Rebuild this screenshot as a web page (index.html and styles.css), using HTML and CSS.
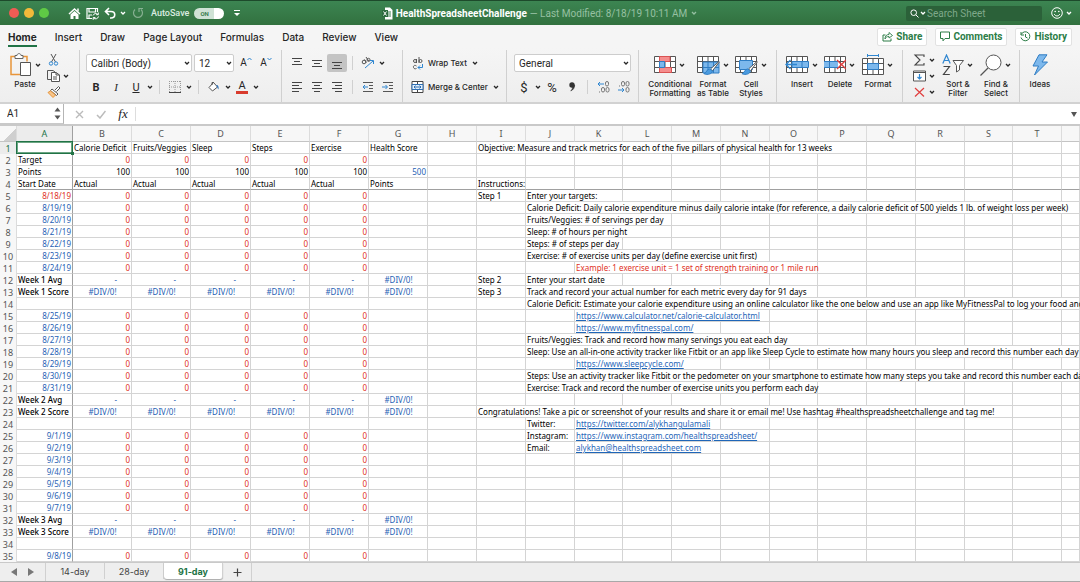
FILE: index.html
```html
<!DOCTYPE html>
<html lang="en">

<head>
    <meta charset="UTF-8">
    <meta name="viewport" content="width=device-width, initial-scale=1.0">
    <title>HealthSpreadsheetChallenge</title>
    <link rel="stylesheet" href="styles.css">
</head>

<body>
    <!-- shared icons -->
    <svg class="defs" aria-hidden="true">
        <symbol id="chev" viewBox="0 0 8 8"><path d="M2 3l2 2 2-2" fill="none" stroke="currentColor" stroke-width="1.3"/></symbol>
        <symbol id="grid" viewBox="0 0 22 18"><path d="M.5 .5h21v16H.5zM.5 5.500h21M.5 11.500h21M5.500 .5v16M11 .5v16M16.500 .5v16" fill="#fff" stroke="#555"/></symbol>
        <symbol id="brush" viewBox="0 0 18 16"><path d="M17 1L8 9l2 2 7-9z" fill="#fff" stroke="#555"/><path d="M7 9c-3 0-3 4-6 5 4 2 9 0 9-3z" fill="#4a9be0" stroke="#2f7dc4"/></symbol>
    </svg>

    <header class="titlebar">
        <div class="quick">
            <div class="lights">
                <span class="light red"></span>
                <span class="light yellow"></span>
                <span class="light green"></span>
            </div>
            <button class="quick-btn" aria-label="Home"><svg width="13" height="13" viewBox="0 0 13 13"><path d="M1 7l5.500-5L12 7" fill="none" stroke="#fff" stroke-width="1.500"/><path d="M2.500 7.500l4-3.500 4 3.500V12h-3V9h-2v3h-3z" fill="#fff"/><path d="M10 1.500v3" stroke="#fff" stroke-width="1.500"/></svg></button>
            <button class="quick-btn" aria-label="Save"><svg width="13" height="13" viewBox="0 0 13 13"><path d="M6 11.500H1V1.500h10.500V5M3 1.500V5h6.500V1.500M3 11V8h3" fill="none" stroke="#fff" stroke-width="1.200"/><path d="M7 8.500a3 3 0 0 1 5-1M12.500 9.500a3 3 0 0 1-5 1.500M12.300 5.500v2.200h-2.200M7.200 12.800v-2.200h2.200" fill="none" stroke="#fff"/></svg></button>
            <button class="quick-btn undo" aria-label="Undo"><svg width="12" height="12" viewBox="0 0 12 12"><path d="M5 1L1.500 4.500 5 8M1.500 4.500H7c5 0 5 6.500 0 6.500H6" fill="none" stroke="#fff" stroke-width="1.600"/></svg><svg class="chev"><use href="#chev"/></svg></button>
            <button class="quick-btn redo" aria-label="Redo"><svg width="12" height="12" viewBox="0 0 12 12"><path d="M3 2.500a4.500 4.500 0 1 0 6 0M7 5V1.500h4" fill="none" stroke="#fff" stroke-width="1.200"/></svg></button>
            <label class="autosave">AutoSave <input type="checkbox" checked><span class="switch">ON</span></label>
            <button class="quick-btn" aria-label="Customize toolbar"><svg width="8" height="8" viewBox="0 0 8 8"><path d="M1 1.500h6" stroke="#fff"/><path d="M1 4h6L4 7z" fill="#fff"/></svg></button>
        </div>
        <div class="doc">
            <svg width="11" height="13" viewBox="0 0 11 13"><path d="M3 .5h5l2.500 2.500v9.500H3z" fill="#fff"/><path d="M6 5h3M6 7h3M6 9h3" stroke="#3a7f4e"/><path d="M0 3h6v7H0z" fill="#2c6b3e"/><path d="M1.500 4.500l3 4M4.500 4.500l-3 4" stroke="#fff"/></svg>
            <strong>HealthSpreadsheetChallenge</strong>
            <span class="modified">— Last Modified: 8/18/19 10:11 AM</span>
            <svg class="chev modified"><use href="#chev"/></svg>
        </div>
        <div class="right">
            <label class="search">
                <svg width="9" height="9" viewBox="0 0 9 9"><path d="M5.800 5.800L8.500 8.500" stroke="#fff"/><circle cx="3.700" cy="3.700" r="2.800" fill="none" stroke="#fff"/></svg>
                <svg class="chev"><use href="#chev"/></svg>
                <input type="text" placeholder="Search Sheet" aria-label="Search Sheet">
            </label>
            <button class="quick-btn smile" aria-label="Feedback"><svg width="12" height="12" viewBox="0 0 12 12"><circle cx="6" cy="6" r="5.300" fill="none" stroke="#fff"/><path d="M3.300 7c.6 2.600 4.800 2.600 5.400 0" fill="none" stroke="#fff"/><circle cx="4.200" cy="4.500" r=".8" fill="#fff"/><circle cx="7.800" cy="4.500" r=".8" fill="#fff"/></svg><svg class="chev"><use href="#chev"/></svg></button>
        </div>
    </header>

    <nav class="tabs">
        <button class="tab active">Home</button>
        <button class="tab">Insert</button>
        <button class="tab">Draw</button>
        <button class="tab">Page Layout</button>
        <button class="tab">Formulas</button>
        <button class="tab">Data</button>
        <button class="tab">Review</button>
        <button class="tab">View</button>
        <div class="actions">
            <button class="action"><svg width="11" height="11" viewBox="0 0 11 11"><path d="M3.500 4H1v6h8V7.500" fill="none" stroke="currentColor"/><path d="M3 8c0-3 1.500-4.500 4-4.500v-2L10.500 4.500 7 7V5.500C5 5.500 4 6 3 8z" fill="none" stroke="currentColor" stroke-width=".9"/></svg>Share</button>
            <button class="action"><svg width="10" height="11" viewBox="0 0 10 11"><path d="M.5 1h9v6.500H5L3 9.800V7.500H.5z" fill="none" stroke="currentColor"/></svg>Comments</button>
            <button class="action"><svg width="11" height="11" viewBox="0 0 11 11"><path d="M1.200 3.500A4.500 4.500 0 1 1 1 6.500M1 1v3h3M5.500 3v3l2 1" fill="none" stroke="currentColor"/></svg>History</button>
        </div>
    </nav>

    <section class="ribbon">
        <div class="group clipboard">
            <button class="big paste">
                <span class="pic"><svg width="22" height="24" viewBox="0 0 22 24"><path d="M5 3.500H1v18h9M13 3.500h4v5" fill="none" stroke="#e8953a" stroke-width="1.500"/><path d="M5 5.500v-3h2c0-2.500 4-2.500 4 0h2v3z" fill="#fff" stroke="#666"/><path d="M10.500 9.500h10v13h-10z" fill="#fff" stroke="#555"/></svg><svg class="chev"><use href="#chev"/></svg></span>
                Paste
            </button>
            <div class="stack">
                <button class="mini" aria-label="Cut"><svg width="13" height="12" viewBox="0 0 13 12"><path d="M4 0l4.500 8M9 0L4.500 8" fill="none" stroke="#555"/><circle cx="4" cy="9.500" r="1.700" fill="none" stroke="#2f86d0"/><circle cx="9" cy="9.500" r="1.700" fill="none" stroke="#2f86d0"/></svg></button>
                <button class="mini" aria-label="Copy"><svg width="13" height="12" viewBox="0 0 13 12"><path d="M4 9.500H.5v-9H6L8 2" fill="none" stroke="#555"/><path d="M4.500 2.500H9L12.500 5v6.500h-8zM9 2.500V5h3.500M6 7h4M6 9h4" fill="#fff" stroke="#555"/></svg><svg class="chev"><use href="#chev"/></svg></button>
                <button class="mini" aria-label="Format painter"><svg width="13" height="12" viewBox="0 0 13 12"><path d="M8 4l3.500-3.500L13 2 9.500 5.500" fill="#fff" stroke="#555"/><path d="M5 3l6 5-1.500 1.500-6-5z" fill="#fff" stroke="#555"/><path d="M3.500 5L1 6.500l5 5L8.500 9z" fill="#f7c58b" stroke="#e8953a"/></svg></button>
            </div>
        </div>

        <div class="group font">
            <div class="row">
                <span class="combo family"><select aria-label="Font"><option>Calibri (Body)</option></select><svg class="chev"><use href="#chev"/></svg></span>
                <span class="combo size"><select aria-label="Font size"><option>12</option></select><svg class="chev"><use href="#chev"/></svg></span>
                <button class="tool grow">A<svg width="5" height="4" viewBox="0 0 5 4"><path d="M.5 3l2-2 2 2" fill="none" stroke="#2f86d0"/></svg></button>
                <button class="tool grow">A<svg width="5" height="4" viewBox="0 0 5 4"><path d="M.5 1l2 2 2-2" fill="none" stroke="#2f86d0"/></svg></button>
            </div>
            <div class="row">
                <button class="tool bold">B</button>
                <button class="tool italic">I</button>
                <button class="tool underline">U</button>
                <svg class="chev"><use href="#chev"/></svg>
                <span class="sep"></span>
                <button class="tool" aria-label="Borders"><svg width="12" height="12" viewBox="0 0 12 12"><path d="M.5 0v11M6 0v11M11.500 0v11M0 .5h12M0 6h12" stroke="#999" stroke-dasharray="1 1"/><path d="M0 11.500h12" stroke="#444"/></svg></button>
                <svg class="chev"><use href="#chev"/></svg>
                <span class="sep"></span>
                <button class="tool" aria-label="Fill color"><svg width="12" height="12" viewBox="0 0 12 12"><path d="M5.500 1.500L1 6.500l3.500 3.500L9.500 6z" fill="#fff" stroke="#555"/><path d="M4 4V1.500h2" fill="none" stroke="#555"/><path d="M8 4c2-.5 3 1 2.500 4.500C9.500 8 9.500 6 8 4z" fill="#2f6fb4"/></svg></button>
                <svg class="chev"><use href="#chev"/></svg>
                <button class="tool color">A</button>
                <svg class="chev"><use href="#chev"/></svg>
            </div>
        </div>

        <div class="group align">
            <div class="row">
                <button class="tool" aria-label="Top align"><svg width="12" height="12" viewBox="0 0 12 12"><path d="M1 1.500h10M3 4.500h6M1 7.500h10" stroke="#444"/></svg></button>
                <button class="tool" aria-label="Middle align"><svg width="12" height="12" viewBox="0 0 12 12"><path d="M1 3.500h10M3 6.500h6M1 9.500h10" stroke="#444"/></svg></button>
                <button class="tool pressed" aria-label="Bottom align"><svg width="12" height="12" viewBox="0 0 12 12"><path d="M1 5.500h10M3 8.500h6M1 11.500h10" stroke="#444"/></svg></button>
                <span class="sep"></span>
                <button class="tool" aria-label="Orientation"><svg width="14" height="12" viewBox="0 0 14 12"><circle cx="3" cy="5" r="1.800" fill="none" stroke="#555"/><path d="M3.500 2.500l2 3M5 0l3 4.500" stroke="#555"/><circle cx="7.500" cy="2.800" r="1.500" fill="none" stroke="#555"/><path d="M4 11l8-7M9 3.500h3.500V7" fill="none" stroke="#2f86d0"/></svg></button>
                <svg class="chev"><use href="#chev"/></svg>
            </div>
            <div class="row">
                <button class="tool" aria-label="Align left"><svg width="12" height="12" viewBox="0 0 12 12"><path d="M1 1.500h10M1 4.500h7M1 7.500h10M1 10.500h7" stroke="#444"/></svg></button>
                <button class="tool" aria-label="Center"><svg width="12" height="12" viewBox="0 0 12 12"><path d="M1 1.500h10M3 4.500h6M1 7.500h10M3 10.500h6" stroke="#444"/></svg></button>
                <button class="tool" aria-label="Align right"><svg width="12" height="12" viewBox="0 0 12 12"><path d="M1 1.500h10M4 4.500h7M1 7.500h10M4 10.500h7" stroke="#444"/></svg></button>
                <span class="sep"></span>
                <button class="tool" aria-label="Decrease indent"><svg width="12" height="12" viewBox="0 0 12 12"><path d="M1 1.500h10M7 4.500h4M7 7.500h4M1 10.500h10" stroke="#555"/><path d="M6 6H1M3 4L1 6l2 2" fill="none" stroke="#2f86d0"/></svg></button>
                <button class="tool" aria-label="Increase indent"><svg width="12" height="12" viewBox="0 0 12 12"><path d="M1 1.500h10M7 4.500h4M7 7.500h4M1 10.500h10" stroke="#555"/><path d="M0 6h5M3.500 4l2 2-2 2" fill="none" stroke="#2f86d0"/></svg></button>
            </div>
        </div>

        <div class="group wrap">
            <div class="row">
                <button class="text-btn"><svg width="13" height="13" viewBox="0 0 13 13"><circle cx="4" cy="4" r="1.500" fill="none" stroke="#555"/><path d="M5.500 2v4M8 0v6" stroke="#555"/><circle cx="9.500" cy="4" r="1.500" fill="none" stroke="#555"/><path d="M5.500 9C3.500 7.500 2 9 2.500 10.500S4.500 12 5.500 11.500" fill="none" stroke="#555"/><path d="M11.500 7v3.500H7M9 8.500l-2 2 2 2" fill="none" stroke="#2f86d0"/></svg>Wrap Text<svg class="chev"><use href="#chev"/></svg></button>
            </div>
            <div class="row">
                <button class="text-btn"><svg width="13" height="12" viewBox="0 0 13 12"><path d="M1 .5h11v11H1zM6.500 .5v11" fill="#fff" stroke="#444"/><path d="M1 3.500h11v5H1z" fill="#e5f1fb" stroke="#2f6fb4"/><path d="M3 6h7M4.500 4.500L3 6l1.500 1.500M8.500 4.500L10 6 8.500 7.500" fill="none" stroke="#2f6fb4"/></svg>Merge &amp; Center<svg class="chev"><use href="#chev"/></svg></button>
            </div>
        </div>

        <div class="group number">
            <div class="row">
                <span class="combo format"><select aria-label="Number format"><option>General</option></select><svg class="chev"><use href="#chev"/></svg></span>
            </div>
            <div class="row">
                <button class="tool sign">$</button>
                <svg class="chev"><use href="#chev"/></svg>
                <button class="tool sign">%</button>
                <button class="tool" aria-label="Comma style"><svg width="8" height="12" viewBox="0 0 8 12"><circle cx="4" cy="4" r="2.700" fill="#333"/><path d="M6.700 4c0 3-1.500 5-4 6 1.500-1.500 2-3 1.800-5z" fill="#333" stroke="#333" stroke-width=".5"/></svg></button>
                <span class="sep"></span>
                <button class="tool" aria-label="Increase decimal"><svg width="13" height="12" viewBox="0 0 13 12"><path d="M7 3H1M3 1L1 3l2 2" fill="none" stroke="#2f86d0"/><rect x="8.500" y=".5" width="3" height="4.500" rx="1.500" fill="none" stroke="#777"/><rect x="4.500" y="6.500" width="3" height="4.500" rx="1.500" fill="none" stroke="#777"/><rect x="9" y="6.500" width="3" height="4.500" rx="1.500" fill="none" stroke="#777"/><path d="M2 11h1" stroke="#777"/></svg></button>
                <button class="tool" aria-label="Decrease decimal"><svg width="13" height="12" viewBox="0 0 13 12"><path d="M1 9h6M5 7l2 2-2 2" fill="none" stroke="#2f86d0"/><rect x="4.500" y=".5" width="3" height="4.500" rx="1.500" fill="none" stroke="#777"/><rect x="9" y=".5" width="3" height="4.500" rx="1.500" fill="none" stroke="#777"/><rect x="9" y="6.500" width="3" height="4.500" rx="1.500" fill="none" stroke="#777"/><path d="M2 5h1" stroke="#777"/></svg></button>
            </div>
        </div>

        <div class="group styles">
            <button class="big">
                <span class="pic"><svg width="22" height="18" viewBox="0 0 22 18"><use href="#grid"/><path d="M5.500 .5H16v5H5.500zM5.500 11.500h12v5h-12z" fill="#f58d8d" stroke="#d95353"/><path d="M5.500 5.500h5v6h-5z" fill="#7db8ec" stroke="#2f7dc4"/></svg><svg class="chev"><use href="#chev"/></svg></span>
                Conditional<br>Formatting
            </button>
            <button class="big">
                <span class="pic"><svg width="23" height="22" viewBox="0 0 23 22"><use href="#grid" y="2" width="22" height="18"/><path d="M6 8h16v11H6z" fill="#7db8ec" stroke="#2f7dc4"/><path d="M11 8v11M16.500 8v11M6 13.500h16" stroke="#2f7dc4"/><use href="#brush" x="6" y="6" width="17" height="16"/></svg><svg class="chev"><use href="#chev"/></svg></span>
                Format<br>as Table
            </button>
            <button class="big">
                <span class="pic"><svg width="23" height="22" viewBox="0 0 23 22"><use href="#grid" y="2" width="22" height="18"/><path d="M4.500 6.500h13v9h-13z" fill="#7db8ec" stroke="#2f7dc4"/><use href="#brush" x="6" y="6" width="17" height="16"/></svg><svg class="chev"><use href="#chev"/></svg></span>
                Cell<br>Styles
            </button>
        </div>

        <div class="group cells">
            <button class="big">
                <span class="pic"><svg width="24" height="18" viewBox="0 0 24 18"><use href="#grid" x="1" width="22" height="18"/><path d="M7 5.500h16.500v6H7z" fill="#7db8ec" stroke="#2f7dc4"/><path d="M17 5.500v6" stroke="#2f7dc4"/><path d="M12 8.500H1.500M5.500 4L1 8.500 5.500 13" fill="none" stroke="#2f86d0" stroke-width="1.300"/></svg><svg class="chev"><use href="#chev"/></svg></span>
                Insert
            </button>
            <button class="big">
                <span class="pic"><svg width="22" height="18" viewBox="0 0 22 18"><use href="#grid"/><path d="M0 5.500h14v6H0z" fill="#7db8ec"/><path d="M0 5.500h14M0 11.500h14M5.500 5.500v6" stroke="#2f7dc4"/><path d="M13 4l9 9M22 4l-9 9" stroke="#e03e3e" stroke-width="1.400"/></svg><svg class="chev"><use href="#chev"/></svg></span>
                Delete
            </button>
            <button class="big">
                <span class="pic"><svg width="22" height="22" viewBox="0 0 22 22"><path d="M5 1.500h12M5.500 0v3M16.500 0v3" stroke="#2f86d0"/><use href="#grid" y="4" width="22" height="18"/><path d="M5.500 9.500h11v6h-11z" fill="#7db8ec" stroke="#2f7dc4"/></svg><svg class="chev"><use href="#chev"/></svg></span>
                Format
            </button>
        </div>

        <div class="group editing">
            <div class="stack">
                <button class="mini" aria-label="AutoSum"><svg width="13" height="12" viewBox="0 0 13 12"><path d="M11 3V1H2l5 5-5 5h9V9" fill="none" stroke="#444" stroke-width="1.100"/></svg><svg class="chev"><use href="#chev"/></svg></button>
                <button class="mini" aria-label="Fill"><svg width="13" height="12" viewBox="0 0 13 12"><path d="M.5 1h12v10H.5z" fill="#fff" stroke="#555"/><path d="M.5 2.500h12" stroke="#555"/><path d="M6.500 4v5M4.500 7l2 2 2-2" fill="none" stroke="#2f86d0" stroke-width="1.200"/></svg><svg class="chev"><use href="#chev"/></svg></button>
                <button class="mini" aria-label="Clear"><svg width="13" height="12" viewBox="0 0 13 12"><path d="M2 2l9 8.500M11 2l-9 8.500" stroke="#e03e3e" stroke-width="1.200"/></svg><svg class="chev"><use href="#chev"/></svg></button>
            </div>
            <button class="big">
                <span class="pic"><svg width="22" height="22" viewBox="0 0 22 22"><path d="M.8 9.500L4.500 1l3.700 8.500M2 6.500h5" fill="none" stroke="#2f86d0" stroke-width="1.200"/><path d="M1.500 12.500h6l-6 8h6.300" fill="none" stroke="#444" stroke-width="1.200"/><path d="M11 6.500h10.500l-4 5v4.500l-3 2v-6.500z" fill="#fff" stroke="#555"/></svg><svg class="chev"><use href="#chev"/></svg></span>
                Sort &amp;<br>Filter
            </button>
            <button class="big">
                <span class="pic"><svg width="22" height="22" viewBox="0 0 22 22"><circle cx="13.500" cy="8.500" r="7.500" fill="#fff" stroke="#555"/><path d="M8 14l-7.500 7.500" stroke="#555" stroke-width="1.200"/></svg><svg class="chev"><use href="#chev"/></svg></span>
                Find &amp;<br>Select
            </button>
        </div>

        <div class="group ideas">
            <button class="big">
                <span class="pic"><svg width="18" height="22" viewBox="0 0 18 22"><path d="M8 .8h8L11 8h5.500L3.500 21l4-9H2z" fill="#7db8ec" stroke="#2f7dc4"/></svg></span>
                Ideas
            </button>
        </div>
    </section>

    <section class="formula">
        <div class="namebox">
            <input type="text" value="A1" aria-label="Name box">
            <svg width="7" height="13" viewBox="0 0 7 13"><path d="M.5 4.500L3.500 .5l3 4zM.5 8.500l3 4 3-4z" fill="#555"/></svg>
        </div>
        <button class="fbtn" aria-label="Cancel"><svg width="9" height="9" viewBox="0 0 9 9"><path d="M1 1l7 7M8 1L1 8" stroke="#bbb" stroke-width="1.400"/></svg></button>
        <button class="fbtn" aria-label="Enter"><svg width="10" height="9" viewBox="0 0 10 9"><path d="M1 5l3 3 5.500-7" fill="none" stroke="#bbb" stroke-width="1.500"/></svg></button>
        <button class="fbtn fx">fx</button>
        <input class="finput" type="text" aria-label="Formula">
        <button class="expand" aria-label="Expand formula bar"><svg width="6" height="6" viewBox="0 0 6 6"><path d="M0 1h6L3 6z" fill="#555"/></svg></button>
    </section>

    <main class="sheet">
        <table>
            <colgroup>
                <col class="c-num">
                <col class="c-date">
                <col class="c-wide" span="2">
                <col class="c-wider">
                <col class="c-wide" span="3">
                <col class="c-text" span="3">
                <col class="c-slim">
                <col class="c-text" span="3">
                <col class="c-slim">
                <col class="c-text" span="3">
                <col class="c-slim">
                <col class="c-text">
                <col>
            </colgroup>
            <thead>
                <tr id="letters"></tr>
            </thead>
            <tbody id="cells"></tbody>
        </table>
    </main>

    <footer class="sheetbar">
        <div class="arrows">
            <button aria-label="Previous sheet"><svg width="6" height="8" viewBox="0 0 6 8"><path d="M6 0v8L0 4z" fill="#777"/></svg></button>
            <button aria-label="Next sheet"><svg width="6" height="8" viewBox="0 0 6 8"><path d="M0 0v8l6-4z" fill="#777"/></svg></button>
        </div>
        <button class="sheet-tab">14-day</button>
        <button class="sheet-tab">28-day</button>
        <button class="sheet-tab current">91-day</button>
        <button class="add" aria-label="Add sheet"><svg width="9" height="9" viewBox="0 0 9 9"><path d="M4.500 .5v8M.5 4.500h8" stroke="#444" stroke-width="1.200"/></svg></button>
    </footer>

    <script src="script.js"></script>
</body>

</html>
```
FILE: styles.css
```css
* {
    margin: 0;
    padding: 0;
    box-sizing: border-box;
}

body {
    min-height: 100vh;
    display: flex;
    flex-direction: column;
    font-family: Roboto, "Liberation Sans", sans-serif;
    font-size: 10px;
    color: #262626;
    background: #efefef;
    overflow: hidden;
}

button,
input,
select {
    font: inherit;
    color: inherit;
    background: none;
    border: none;
    outline: none;
}

svg {
    display: block;
    flex: none;
}

.defs {
    position: absolute;
    width: 0;
    height: 0;
}

.chev {
    width: 8px;
    height: 8px;
}

/* title bar */
.titlebar {
    height: 25px;
    display: grid;
    grid-template-columns: 1fr auto 1fr;
    align-items: center;
    color: #fff;
    background: linear-gradient(#3c8552, #32713f);
    border-top: 1px solid #1d4a2b;
}

.quick,
.lights,
.doc,
.right,
.quick-btn {
    display: flex;
    align-items: center;
}

.quick {
    gap: 5px;
    padding-left: 9px;
}

.lights {
    gap: 5px;
    margin-right: 14px;
}

.light {
    width: 10px;
    height: 10px;
    border-radius: 50%;
}

.light.red {
    background: #ee5c54;
}

.light.yellow {
    background: #f3b93a;
}

.light.green {
    background: #5fca45;
}

.undo {
    gap: 3px;
}

.redo {
    opacity: .4;
}

.autosave {
    display: flex;
    align-items: center;
    gap: 5px;
    font-size: 9px;
    font-weight: 500;
    color: #dcebe0;
    margin: 0 4px 0 2px;
}

.autosave input {
    position: absolute;
    opacity: 0;
}

.switch {
    width: 30px;
    height: 11px;
    line-height: 11px;
    padding-left: 6px;
    font-size: 6px;
    font-weight: 700;
    color: #3a7f4e;
    background: linear-gradient(90deg, #cfe2d5 20px, #fff 20px);
    border-radius: 6px;
}

.doc {
    gap: 3px;
}

.modified {
    color: #96c0a2;
}

.right {
    justify-content: flex-end;
    gap: 9px;
    padding-right: 7px;
}

.search {
    display: flex;
    align-items: center;
    width: 136px;
    height: 15px;
    padding-left: 4px;
    background: #2b6139;
    border-radius: 2px;
}

.search input {
    width: 100px;
}

.search input::placeholder {
    color: #7fa98a;
}

.smile {
    gap: 2px;
}

/* ribbon tabs */
.tabs {
    height: 23px;
    display: flex;
    align-items: center;
    gap: 18px;
    padding: 0 8px;
    background: #f5f5f5;
}

.tab {
    height: 20px;
    padding-top: 2px;
    font-family: Inter, "Liberation Sans", sans-serif;
    font-weight: 500;
    border-bottom: 2px solid transparent;
}

.tab.active {
    font-weight: 700;
    border-color: #217346;
}

.actions {
    display: flex;
    gap: 8px;
    margin-left: auto;
}

.action {
    display: flex;
    align-items: center;
    gap: 3px;
    height: 18px;
    padding: 0 4px;
    font-weight: 700;
    color: #2c7d47;
    background: #fff;
    border: 1px solid #e2e2e2;
    border-radius: 2px;
}

/* ribbon */
.ribbon {
    display: grid;
    grid-template-columns: 80px 202px 121px 104px 132px 138px 126px 117px 1fr;
    height: 56px;
    padding: 2px 0 5px;
    background: linear-gradient(#f5f5f5, #eeeeee);
    border-bottom: 2px solid #d2d2d2;
}

.group {
    padding-top: 4px;
    border-right: 1px solid #d0d0d0;
}

.row {
    display: flex;
    align-items: center;
    height: 18px;
    margin-bottom: 6px;
}

.tool {
    display: flex;
    align-items: center;
    justify-content: center;
    width: 20px;
    height: 18px;
    font-size: 11px;
}

.tool.pressed {
    background: #c4c4c4;
    border-radius: 2px;
}

.sep {
    width: 1px;
    height: 14px;
    margin: 0 5px;
    background: #d0d0d0;
}

.combo {
    position: relative;
    height: 18px;
}

.combo select {
    appearance: none;
    width: 100%;
    height: 100%;
    padding-left: 4px;
    background: #fff;
    border: 1px solid #cdcdcd;
    border-radius: 2px;
}

.combo .chev {
    position: absolute;
    right: 1px;
    top: 5px;
}

.family {
    width: 106px;
    margin-right: 2px;
}

.size {
    width: 40px;
    margin-right: 2px;
}

.format {
    width: 117px;
}

.clipboard,
.styles,
.cells,
.editing,
.ideas {
    display: grid;
    align-items: start;
}

.clipboard {
    grid-template-columns: 42px 1fr;
    column-gap: 3px;
}

.font {
    padding-left: 6px;
}

.align {
    padding-left: 5px;
}

.wrap {
    padding-left: 8px;
}

.number {
    padding-left: 7px;
}

.styles {
    grid-template-columns: 46px 40px 36px;
    padding-left: 8px;
}

.cells {
    grid-template-columns: 38px 38px 38px;
    padding-left: 6px;
}

.editing {
    grid-template-columns: 26px 38px 38px;
    padding-left: 10px;
}

.ideas {
    grid-template-columns: 38px;
    padding-left: 1px;
    border: none;
}

.big,
.text-btn {
    font-family: Inter, "Liberation Sans", sans-serif;
    font-size: 8px;
    font-weight: 500;
}

.big {
    display: block;
    width: 100%;
    line-height: 9px;
    white-space: nowrap;
}

.pic {
    display: flex;
    align-items: center;
    justify-content: center;
    gap: 2px;
    height: 22px;
    margin-bottom: 4px;
}

.paste {
    width: 50px;
}

.paste .pic {
    margin-left: 2px;
}

.stack {
    display: grid;
    gap: 4px;
}

.mini {
    display: flex;
    align-items: center;
    gap: 2px;
    height: 12px;
}

.clipboard .stack {
    padding-left: 2px;
}

.grow {
    align-items: flex-start;
    font-size: 10px;
    padding-top: 3px;
}

.bold {
    font-weight: 700;
}

.italic {
    font-family: "Liberation Serif", serif;
    font-style: italic;
}

.underline {
    text-decoration: underline;
}

.color {
    width: 12px;
    height: 14px;
    margin: 0 4px;
    border-bottom: 3px solid #d83b2d;
}

.sign {
    font-size: 13px;
}

.text-btn {
    display: flex;
    align-items: center;
    gap: 4px;
}

/* formula bar */
.formula {
    display: flex;
    align-items: center;
    height: 22px;
    background: #fff;
    border-bottom: 2px solid #c9c9c9;
}

.namebox {
    display: flex;
    align-items: center;
    width: 64px;
    height: 20px;
    padding: 0 3px 0 7px;
    border-right: 1px solid #b5b5b5;
    border-bottom: 1px solid #c9c9c9;
    margin-right: 4px;
}

.namebox input {
    width: 47px;
}

.fbtn {
    display: flex;
    align-items: center;
    justify-content: center;
    width: 22px;
    height: 20px;
}

.fx {
    font-family: "Liberation Serif", serif;
    font-size: 13px;
    font-style: italic;
}

.finput {
    flex: 1;
    height: 14px;
    margin-left: 1px;
    border-left: 1px solid #ddd;
}

.expand {
    width: 9px;
}

/* cells */
.sheet {
    background: #fff;
    overflow: hidden;
}

table {
    width: 100%;
    table-layout: fixed;
    border-collapse: separate;
    border-spacing: 0;
    font-family: "Noto Sans", "Liberation Sans", sans-serif;
    font-size: 8px;
    line-height: 11px;
    color: #000;
}

.c-num {
    width: 17px;
}

.c-date {
    width: 56px;
}

.c-wide {
    width: 59px;
}

.c-wider {
    width: 60px;
}

.c-text {
    width: 49px;
}

.c-slim {
    width: 48px;
}

th {
    font-size: 9px;
    font-weight: 400;
    color: #555;
    background: #f7f7f7;
    border-right: 1px solid #dcdcdc;
}

thead th {
    height: 16px;
    border-bottom: 1px solid #c4c4c4;
}

.corner {
    background: linear-gradient(135deg, #f7f7f7 60%, #cfcfcf 60%);
}

th.on {
    color: #217346;
    background: #ececec;
}

td {
    height: 12px;
    padding: 0 0 0 1px;
    white-space: nowrap;
    border-right: 1px solid #d4d4d4;
    border-bottom: 1px solid #d4d4d4;
}

/* frozen panes */
tbody tr:nth-child(4) td {
    border-bottom-color: #a0a0a0;
}

td:nth-child(2),
thead th:nth-child(2) {
    border-right-color: #a0a0a0;
}

.num {
    text-align: right;
    padding-right: 1px;
}

.red {
    color: #e0301e;
}

.blue {
    color: #1f5fb4;
}

.err {
    text-align: center;
}

.dash {
    text-align: right;
    padding-right: 14px;
}

.label {
    font-weight: 500;
}

td a {
    color: #1f66b8;
}

td.selected {
    position: relative;
}

.selected::before {
    content: "";
    position: absolute;
    inset: -1px;
    border: 1px solid #217346;
    outline: 1px solid #6ba583;
    outline-offset: -2px;
}

.selected::after {
    content: "";
    position: absolute;
    right: -2px;
    bottom: -2px;
    width: 3px;
    height: 3px;
    background: #217346;
}

/* sheet tabs */
.sheetbar {
    display: flex;
    height: 20px;
    font-family: Inter, "Liberation Sans", sans-serif;
    background: #eeeeee;
    border-top: 1px solid #c9c9c9;
    border-bottom: 1px solid #a8a8a8;
}

.arrows {
    display: flex;
    align-items: center;
    gap: 11px;
    width: 46px;
    padding-left: 11px;
    border-right: 1px solid #d0d0d0;
}

.sheet-tab {
    width: 59px;
    height: 16px;
    font-size: 9px;
    color: #444;
    border-right: 1px solid #d0d0d0;
}

.sheet-tab.current {
    font-weight: 700;
    color: #217346;
    background: #fff;
    border-radius: 0 0 3px 3px;
    box-shadow: 0 1px 1px #aaa;
}

.add {
    display: flex;
    align-items: center;
    justify-content: center;
    width: 29px;
    border-right: 1px solid #d0d0d0;
}
```
FILE: script.js
```js
var columns = 'ABCDEFGHIJKLMNOPQRSTU'.split('');
var row_count = 35;

// text cells: address -> [text, number of columns it runs over, class]
var notes = {
    B1: ['Calorie Deficit'], C1: ['Fruits/Veggies'], D1: ['Sleep'], E1: ['Steps'], F1: ['Exercise'], G1: ['Health Score'],
    A2: ['Target'], A3: ['Points'], A4: ['Start Date'], G3: ['500', 1, 'num blue'], G4: ['Points'],
    I1: ['Objective: Measure and track metrics for each of the five pillars of physical health for 13 weeks', 8],
    I4: ['Instructions:'],
    I5: ['Step 1'], J5: ['Enter your targets:', 2],
    J6: ['Calorie Deficit: Daily calorie expenditure minus daily calorie intake (for reference, a daily calorie deficit of 500 yields 1 lb. of weight loss per week)', 12],
    J7: ['Fruits/Veggies: # of servings per day', 3],
    J8: ['Sleep: # of hours per night', 3],
    J9: ['Steps: # of steps per day', 2],
    J10: ['Exercise: # of exercise units per day (define exercise unit first)', 5],
    K11: ['Example: 1 exercise unit = 1 set of strength training or 1 mile run', 5, 'red'],
    I12: ['Step 2'], J12: ['Enter your start date', 2],
    I13: ['Step 3'], J13: ['Track and record your actual number for each metric every day for 91 days', 6],
    J14: ['Calorie Deficit: Estimate your calorie expenditure using an online calculator like the one below and use an app like MyFitnessPal to log your food and ca', 12],
    K15: ['https://www.calculator.net/calorie-calculator.html', 4, 'link'],
    K16: ['https://www.myfitnesspal.com/', 3, 'link'],
    J17: ['Fruits/Veggies: Track and record how many servings you eat each day', 6],
    J18: ['Sleep: Use an all-in-one activity tracker like Fitbit or an app like Sleep Cycle to estimate how many hours you sleep and record this number each day', 12],
    K19: ['https://www.sleepcycle.com/', 3, 'link'],
    J20: ['Steps: Use an activity tracker like Fitbit or the pedometer on your smartphone to estimate how many steps you take and record this number each day', 12],
    J21: ['Exercise: Track and record the number of exercise units you perform each day', 6],
    I23: ['Congratulations! Take a pic or screenshot of your results and share it or email me! Use hashtag #healthspreadsheetchallenge and tag me!', 11],
    J24: ['Twitter:'], K24: ['https://twitter.com/alykhangulamali', 3, 'link'],
    J25: ['Instagram:'], K25: ['https://www.instagram.com/healthspreadsheet/', 4, 'link'],
    J26: ['Email:'], K26: ['alykhan@healthspreadsheet.com', 3, 'link']
};

// value of the tracker part, columns A to G
function Tracker(col, row) {
    var metric = 'BCDEF'.indexOf(col) >= 0;
    if (metric && row == 2) return ['0', 1, 'num red'];
    if (metric && row == 3) return ['100', 1, 'num'];
    if (metric && row == 4) return ['Actual'];
    if (row < 5) return null;

    var week = Math.floor((row - 5) / 10);
    var day = (row - 5) % 10;
    if (day < 7) {
        if (metric) return ['0', 1, 'num red'];
        if (col == 'A') {
            var date = new Date(2019, 7, 18 + week * 7 + day);
            var text = (date.getMonth() + 1) + '/' + date.getDate() + '/19';
            return [text, 1, row == 5 ? 'num red' : 'num blue'];
        }
    } else if (day == 7) {
        if (metric) return ['-', 1, 'dash blue'];
        if (col == 'A') return ['Week ' + (week + 1) + ' Avg', 1, 'label'];
        if (col == 'G') return ['#DIV/0!', 1, 'err blue'];
    } else if (day == 8) {
        if (col == 'A') return ['Week ' + (week + 1) + ' Score', 1, 'label'];
        if (metric || col == 'G') return ['#DIV/0!', 1, 'err blue'];
    }
    return null;
}

var letters = '<th class="corner"></th>';
columns.forEach(function (col) {
    letters += '<th class="' + (col == 'A' ? 'on' : '') + '">' + (col == 'U' ? '' : col) + '</th>';
});
document.getElementById('letters').innerHTML = letters;

var html = '';
for (var row = 1; row <= row_count; row++) {
    html += '<tr><th class="' + (row == 1 ? 'on' : '') + '">' + row + '</th>';
    for (var i = 0; i < columns.length; i++) {
        var cell = notes[columns[i] + row] || Tracker(columns[i], row) || [''];
        var span = cell[1] || 1;
        var name = cell[2] || '';
        var text = cell[0];
        if (name == 'link') {
            text = '<a href="' + (text.indexOf('@') > 0 ? 'mailto:' : '') + text + '">' + text + '</a>';
        }
        if (row == 1 && i == 0) name = 'selected';
        html += '<td class="' + name + '" colspan="' + span + '">' + text + '</td>';
        i += span - 1;
    }
    html += '</tr>';
}
document.getElementById('cells').innerHTML = html;
```
